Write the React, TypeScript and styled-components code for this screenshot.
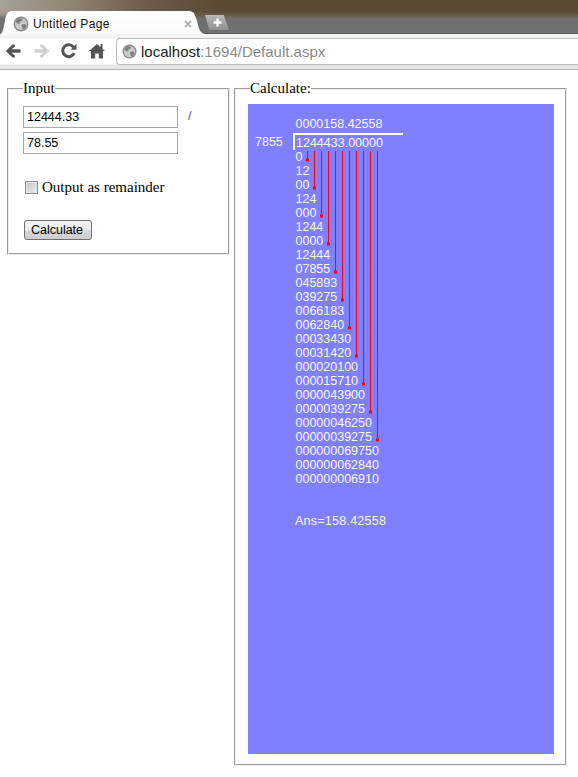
import React from "react";
import styled, { createGlobalStyle } from "styled-components";

const Global = createGlobalStyle`
  html, body { margin: 0; padding: 0; background: #fff; }
  body { font-family: "Liberation Serif", "Times New Roman", serif; }
`;

const Page = styled.div`
  width: 578px;
  height: 777px;
  overflow: hidden;
`;

const TabStrip = styled.div`
  height: 34px;
  box-sizing: border-box;
  display: flex;
  align-items: flex-end;
  border-bottom: 1px solid #555;
  background:
    linear-gradient(180deg, rgba(111,111,111,0) 0 12px, #6f6f6f 19px),
    linear-gradient(90deg, #a8a196 0, #8f8576 70px, #6a5a46 150px, #5b4b35 220px, #5b4b35 100%);
`;

const Tab = styled.div`
  width: 206px;
  height: 23px;
  margin-bottom: -1px;
  box-sizing: border-box;
  padding: 2px 14px 0 13px;
  display: flex;
  align-items: center;
  gap: 4px;
  background: linear-gradient(180deg, #fff 0, #fafafa 100%);
  clip-path: path("M0 23 C3 23 3 18 5 10 C6 4 7 0 12 0 L189 0 C194 0 195 4 197 10 C199 18 200 23 206 23 Z");
`;

const TabTitle = styled.span`
  flex: 1;
  font: 12px/14px "Liberation Sans", Arial, sans-serif;
  letter-spacing: 0.03em;
  color: #111;
`;

const TabClose = styled.span`
  display: flex;
  color: #b4b4b4;
`;

const NewTab = styled.div`
  width: 24px;
  height: 15px;
  margin: 0 0 3px -1px;
  display: flex;
  align-items: center;
  justify-content: center;
  background: linear-gradient(180deg, #b9b9b9, #8e8e8e);
  clip-path: polygon(0 0, 78% 0, 100% 100%, 18% 100%);
`;

const Toolbar = styled.div`
  height: 36px;
  box-sizing: border-box;
  padding: 4px 0 0 5px;
  display: flex;
  align-items: flex-start;
  background: linear-gradient(180deg, #f6f6f6 0, #f2f2f2 4px, #fff 5px, #fff 30px, #e6e6e6 31px, #e6e6e6 100%);
  border-bottom: 1px solid #b3b3bb;
`;

const NavButton = styled.div<{ $w: number }>`
  width: ${(p) => p.$w}px;
  height: 26px;
  display: flex;
  align-items: center;
`;

const Omnibox = styled.div`
  flex: 1;
  height: 27px;
  box-sizing: border-box;
  margin-left: 1px;
  padding-left: 5px;
  display: flex;
  align-items: center;
  gap: 4px;
  background: #fff;
  border: 1px solid #bcbcbc;
  border-right: 0;
  border-radius: 4px 0 0 4px;
  font: 15px/18px "Liberation Sans", Arial, sans-serif;
  color: #8a8a8a;
`;

const Host = styled.span`
  color: #222;
`;

const Main = styled.main`
  display: flex;
  align-items: flex-start;
  gap: 4px;
  padding: 10px 0 0 7px;
`;

const Group = styled.fieldset<{ $w: number; $h: number; $pad: string }>`
  width: ${(p) => p.$w}px;
  height: ${(p) => p.$h}px;
  box-sizing: border-box;
  margin: 0;
  padding: ${(p) => p.$pad};
  border: 2px groove #f0f0f0;
  min-inline-size: 0;
`;

const GroupLegend = styled.legend<{ $inset: number }>`
  padding: 0;
  margin-left: ${(p) => p.$inset}px;
  font: 15px/17px "Liberation Serif", "Times New Roman", serif;
  color: #000;
`;

const InputRow = styled.div`
  display: flex;
  align-items: center;
  gap: 10px;
  height: 22px;
  margin-bottom: 4px;
`;

const TextBox = styled.input`
  width: 155px;
  height: 22px;
  box-sizing: border-box;
  padding: 0 3px;
  border: 1px solid #a9a9a9;
  border-radius: 0;
  outline: none;
  font: 12.5px "Liberation Sans", Arial, sans-serif;
  color: #000;
`;

const Slash = styled.span`
  font: 12.5px "Liberation Sans", Arial, sans-serif;
  color: #555;
  margin-top: -2px;
`;

const CheckRow = styled.label`
  display: flex;
  align-items: center;
  gap: 4px;
  margin: 24px 0 0 2px;
  height: 18px;
  font: 15px/18px "Liberation Serif", "Times New Roman", serif;
  color: #000;
`;

const Check = styled.input`
  width: 13px;
  height: 13px;
  margin: 0;
  appearance: none;
  box-sizing: border-box;
  border: 1px solid #8e8f8f;
  background: linear-gradient(135deg, #c4c4c4, #efefef);
  box-shadow: inset 0 0 0 1px #e4e4e4;
`;

const CalcButton = styled.button`
  display: block;
  width: 68px;
  height: 20px;
  margin: 24px 0 0 1px;
  padding: 0 2px 0 0;
  border: 1px solid #707070;
  border-radius: 3px;
  background: linear-gradient(180deg, #f4f4f4 0, #ebebeb 50%, #d6d6d6 55%, #cfcfcf 100%);
  font: 12.5px/18px "Liberation Sans", Arial, sans-serif;
  color: #000;
`;

const Panel = styled.div`
  position: relative;
  width: 306px;
  height: 650px;
  box-sizing: border-box;
  padding: 13px 0 0 7px;
  background: #8080ff;
  color: #f8f8ff;
  font: 12.5px/14px "Liberation Sans", Arial, sans-serif;
`;

const Division = styled.div`
  display: grid;
  grid-template-columns: 38px 110px;
`;

const Quotient = styled.div`
  grid-column: 2;
  padding-left: 2.5px;
  height: 16px;
`;

const Divisor = styled.div`
  padding-top: 2px;
`;

const Dividend = styled.div`
  height: 14px;
  padding: 1px 0 0 1px;
  border-top: 2px solid #fff;
  border-left: 2px solid #fff;
`;

const Steps = styled.div`
  margin-left: 40.5px;
`;

const Step = styled.div`
  height: 14px;
  white-space: pre;
`;

const Answer = styled.div`
  margin: 28px 0 0 40px;
  letter-spacing: 0.25px;
`;

const Arrows = styled.svg`
  position: absolute;
  left: 0;
  top: 0;
  pointer-events: none;
`;

const Globe = ({ size = 16 }: { size?: number }) => (
  <svg width={size} height={size} viewBox="0 0 16 16" style={{ flex: "none" }}>
    <circle cx="8" cy="8" r="7.5" fill="#8d8d8d" />
    <circle cx="8" cy="8" r="6" fill="#c9c9c9" />
    <path d="M4 3.2 C6 2 8 2.2 9.5 3 L9 5 L7 5.5 L6.5 8 L4.5 7.5 L2.6 6 C2.8 5 3.3 4 4 3.2Z" fill="#7f7f7f" />
    <path d="M8.5 8.5 L12 8 L13.4 9.5 C13 11.5 11.5 13 10 13.6 L9 11 Z" fill="#7f7f7f" />
  </svg>
);

const Back = ({ color }: { color: string }) => (
  <svg width="16" height="14" viewBox="0 0 16 14">
    <path d="M7.5 0.5 L0.8 7 L7.5 13.5 L9.8 13.5 L9.8 11.5 L6.6 8.8 L15.5 8.8 L15.5 5.2 L6.6 5.2 L9.8 2.5 L9.8 0.5 Z" fill={color} />
  </svg>
);

const Forward = ({ color }: { color: string }) => (
  <svg width="16" height="14" viewBox="0 0 16 14">
    <path d="M8.5 0.5 L15.2 7 L8.5 13.5 L6.2 13.5 L6.2 11.5 L9.4 8.8 L0.5 8.8 L0.5 5.2 L9.4 5.2 L6.2 2.5 L6.2 0.5 Z" fill={color} />
  </svg>
);

const Reload = () => (
  <svg width="16" height="16" viewBox="0 0 16 16">
    <path d="M13.2 10.2 A6 6 0 1 1 12.6 4.1" fill="none" stroke="#555" strokeWidth="3" />
    <path d="M9.5 6.8 L15.5 6.8 L15.5 0.8 Z" fill="#555" />
  </svg>
);

const Home = () => (
  <svg width="16" height="16" viewBox="0 0 16 16">
    <path d="M8 1 L11.5 4 L11.5 1 L13.5 1 L13.5 5.8 L16 8 L14 8 L14 15.5 L9.8 15.5 L9.8 10.5 L6.2 10.5 L6.2 15.5 L2 15.5 L2 8 L0 8 Z" fill="#555" />
  </svg>
);

const steps = [
  "0", "12", "00", "124", "000", "1244", "0000", "12444", "07855", "045893",
  "039275", "0066183", "0062840", "00033430", "00031420", "000020100",
  "000015710", "0000043900", "0000039275", "00000046250", "00000039275",
  "000000069750", "000000062840", "000000006910",
];

const arrows = Array.from({ length: 11 }, (_, i) => ({ x: 59.5 + 7 * i, end: 56 + 28 * i }));

export default function App() {
  return (
    <Page>
      <Global />
      <TabStrip>
        <Tab>
          <Globe />
          <TabTitle>Untitled Page</TabTitle>
          <TabClose>
            <svg width="8" height="8" viewBox="0 0 8 8">
              <path d="M1 1 L7 7 M7 1 L1 7" stroke="currentColor" strokeWidth="1.8" />
            </svg>
          </TabClose>
        </Tab>
        <NewTab>
          <svg width="9" height="9" viewBox="0 0 9 9">
            <path d="M4.5 0.5 V8.5 M0.5 4.5 H8.5" stroke="#fff" strokeWidth="2.4" />
          </svg>
        </NewTab>
      </TabStrip>
      <Toolbar>
        <NavButton $w={29}><Back color="#555" /></NavButton>
        <NavButton $w={27}><Forward color="#cfcfcf" /></NavButton>
        <NavButton $w={28}><Reload /></NavButton>
        <NavButton $w={26}><Home /></NavButton>
        <Omnibox>
          <Globe size={15} />
          <span><Host>localhost</Host>:1694/Default.aspx</span>
        </Omnibox>
      </Toolbar>
      <Main>
        <Group $w={223} $h={175} $pad="9px 14px 0 14px">
          <GroupLegend $inset={0}>Input</GroupLegend>
          <InputRow>
            <TextBox defaultValue="12444.33" />
            <Slash>/</Slash>
          </InputRow>
          <InputRow>
            <TextBox defaultValue="78.55" />
          </InputRow>
          <CheckRow>
            <Check type="checkbox" />
            Output as remainder
          </CheckRow>
          <CalcButton>Calculate</CalcButton>
        </Group>
        <Group $w={333} $h={686} $pad="7px 11px 0 12px">
          <GroupLegend $inset={2}>Calculate:</GroupLegend>
          <Panel>
            <Division>
              <Quotient>0000158.42558</Quotient>
              <Divisor>7855</Divisor>
              <Dividend>1244433.00000</Dividend>
            </Division>
            <Steps>
              {steps.map((s, i) => (
                <Step key={i}>{s}</Step>
              ))}
            </Steps>
            <Answer>Ans=158.42558</Answer>
            <Arrows width="306" height="650" viewBox="0 0 306 650">
              {arrows.map((a) => (
                <g key={a.x}>
                  <line x1={a.x} y1={47} x2={a.x} y2={a.end} stroke="#f00" strokeWidth="1" />
                  <rect x={a.x - 1.5} y={a.end - 1.5} width="3" height="3" fill="#f00" />
                </g>
              ))}
            </Arrows>
          </Panel>
        </Group>
      </Main>
    </Page>
  );
}
